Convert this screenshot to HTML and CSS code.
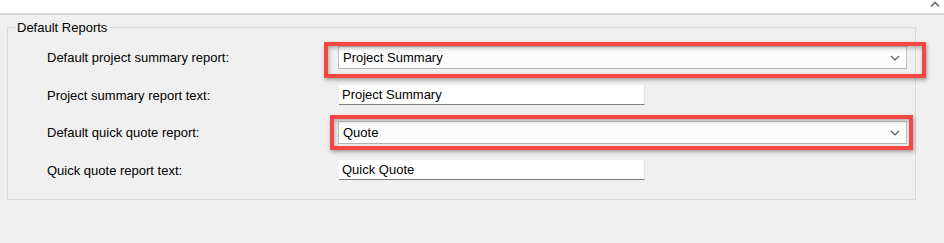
FILE: index.html
```html
<!DOCTYPE html>
<html>
<head>
<meta charset="utf-8">
<link rel="stylesheet" href="styles.css">
</head>
<body>
<div class="topbar">
  <svg class="collapse" width="10" height="6" viewBox="0 0 10 6"><path d="M1 5.5 L5 1.5 L9 5.5" fill="none" stroke="#6a6a6a" stroke-width="1.6"/></svg>
</div>
<fieldset class="group">
  <legend class="legend">Default Reports</legend>
  <div class="form">
    <div class="label">Default project summary report:</div>
    <div class="combo-wrap">
      <div class="combo">
        <span class="value">Project Summary</span>
        <svg class="chev" width="10" height="6" viewBox="0 0 10 6"><path d="M1 1 L5 5 L9 1" fill="none" stroke="#5a5a5a" stroke-width="1.2"/></svg>
      </div>
      <div class="highlight hl-1"></div>
    </div>

    <div class="label">Project summary report text:</div>
    <div class="text-wrap"><div class="textbox">Project Summary</div></div>

    <div class="label">Default quick quote report:</div>
    <div class="combo-wrap">
      <div class="combo">
        <span class="value">Quote</span>
        <svg class="chev" width="10" height="6" viewBox="0 0 10 6"><path d="M1 1 L5 5 L9 1" fill="none" stroke="#5a5a5a" stroke-width="1.2"/></svg>
      </div>
      <div class="highlight hl-2"></div>
    </div>

    <div class="label">Quick quote report text:</div>
    <div class="text-wrap"><div class="textbox">Quick Quote</div></div>
  </div>
</fieldset>
</body>
</html>
```
FILE: styles.css
```css
html, body {
  margin: 0;
  padding: 0;
  background: #f0f0f0;
  font-family: "Liberation Sans", Arial, sans-serif;
  font-size: 13px;
  color: #000;
}
.topbar {
  height: 13px;
  background: #fff;
  border-bottom: 2px solid #d6d6d6;
  display: flex;
  justify-content: flex-end;
  align-items: flex-start;
  padding-right: 4px;
}
.collapse {
  margin-top: 1px;
}
.group {
  margin: 5px 0 0 7px;
  width: 909px;
  box-sizing: border-box;
  border: 1px solid #dadada;
  padding: 0;
  height: 180px;
}
.legend {
  margin-left: 7px;
  padding: 0 2px;
  line-height: 15px;
}
.form {
  display: grid;
  grid-template-columns: 291px 1fr;
  grid-template-rows: 23px 20px 23px 20px;
  row-gap: 16px;
  padding: 11px 0 0 39px;
  align-items: center;
}
.label {
  line-height: 15px;
}
.combo-wrap {
  position: relative;
  width: 569px;
  height: 23px;
}
.combo {
  box-sizing: border-box;
  height: 23px;
  width: 569px;
  background: #fcfcfc;
  border: 1px solid #c4c4c4;
  border-bottom-color: #b4b4b4;
  display: flex;
  align-items: center;
  justify-content: space-between;
  padding: 0 6px 0 4px;
}
.value {
  line-height: 15px;
}
.chev {
  display: block;
}
.text-wrap {
  display: flex;
  align-items: center;
  height: 20px;
}
.textbox {
  box-sizing: border-box;
  margin-left: 1px;
  width: 306px;
  height: 20px;
  background: #fff;
  border-bottom: 1px solid #808080;
  border-right: 1px solid #e4e4e4;
  padding: 2px 0 0 3px;
  line-height: 15px;
}
.highlight {
  position: absolute;
  border: 4px solid #f54545;
  box-shadow: 1px 2px 4px rgba(0, 0, 0, 0.35), inset 1px 2px 4px rgba(0, 0, 0, 0.28);
  pointer-events: none;
}
.hl-1 {
  left: -14px;
  top: -4px;
  right: -19px;
  bottom: -9px;
}
.hl-2 {
  left: -8px;
  top: -6px;
  right: -6px;
  bottom: -6px;
}
```
